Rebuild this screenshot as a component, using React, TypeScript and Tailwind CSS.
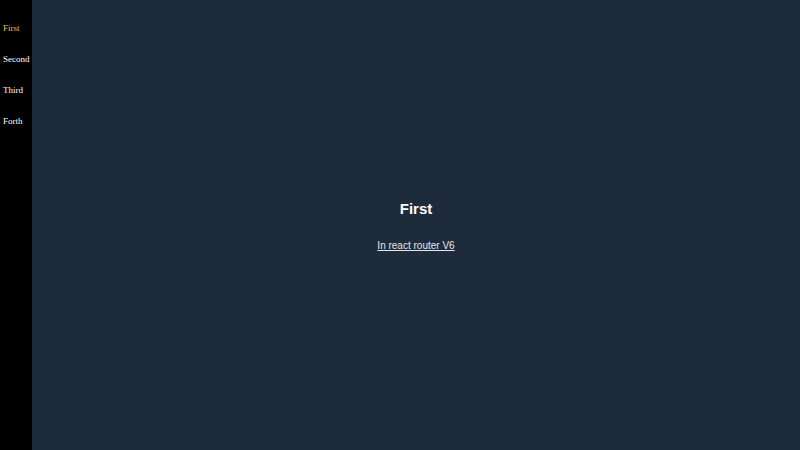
import React from "react";

export default function App() {
  const items = ["First", "Second", "Third", "Forth"];
  return (
    <div className="flex h-[450px] w-[800px] overflow-hidden">
      <nav className="flex w-[32px] shrink-0 flex-col bg-black pt-[21px] pl-[3px] gap-[17px]">
        {items.map((t, i) => (
          <a
            key={t}
            className={`block h-[14px] text-[9px] leading-[14px] whitespace-nowrap font-['Liberation_Serif',serif] ${
              i === 0 ? "text-[#e3c56a]" : "text-white"
            }`}
          >
            {t}
          </a>
        ))}
      </nav>
      <main className="flex flex-1 flex-col items-center justify-center bg-[#1e2b3b] pt-[2px] font-['Liberation_Sans',Arial,sans-serif]">
        <h1 className="text-[15px] font-bold leading-[18px] text-white">First</h1>
        <a className="mt-[22px] text-[10px] leading-[12px] text-[#e5e7eb] underline">
          In react router V6
        </a>
      </main>
    </div>
  );
}
